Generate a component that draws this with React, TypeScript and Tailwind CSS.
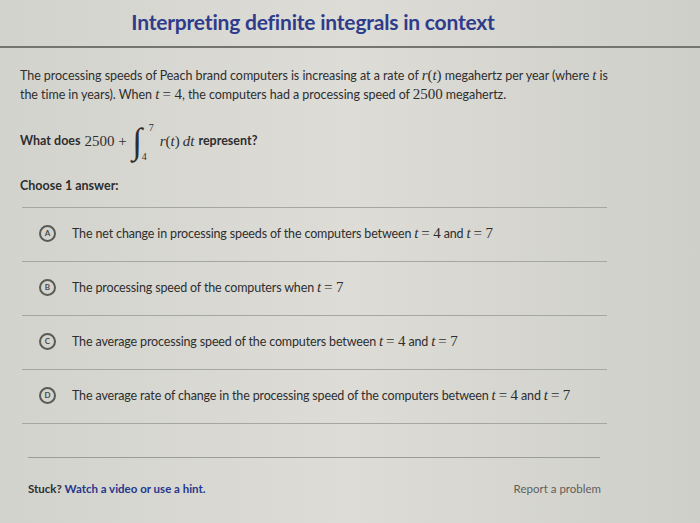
import React from "react";

const serif = "font-['Liberation_Serif','DejaVu_Serif',serif]";

// inline math bits, KaTeX-ish
function M({ children }: { children: React.ReactNode }) {
  return <span className={`${serif} text-[15px] font-normal`}>{children}</span>;
}
function I({ children }: { children: React.ReactNode }) {
  return <span className={`${serif} italic text-[15px] font-normal`}>{children}</span>;
}

const options = [
  {
    key: "A",
    text: (
      <>
        The net change in processing speeds of the computers between <I>t</I> <M>= 4</M> and <I>t</I> <M>= 7</M>
      </>
    ),
  },
  {
    key: "B",
    text: (
      <>
        The processing speed of the computers when <I>t</I> <M>= 7</M>
      </>
    ),
  },
  {
    key: "C",
    text: (
      <>
        The average processing speed of the computers between <I>t</I> <M>= 4</M> and <I>t</I> <M>= 7</M>
      </>
    ),
  },
  {
    key: "D",
    text: (
      <>
        The average rate of change in the processing speed of the computers between <I>t</I> <M>= 4</M> and{" "}
        <I>t</I> <M>= 7</M>
      </>
    ),
  },
];

export default function App() {
  return (
    <div className="w-[700px] h-[523px] overflow-hidden bg-gradient-to-r from-[#d3d3ce] via-[#dddcd7] to-[#cfcfca] font-['Lato','Open_Sans',sans-serif] text-[#2e2e2e]">
      {/* Header */}
      <div className="h-[46px] flex items-center justify-center pb-[2px] pr-[74px]">
        <h1 className="text-[21px] font-bold text-[#2f3c8a] tracking-[-0.2px]">
          Interpreting definite integrals in context
        </h1>
      </div>
      <div className="h-[2px] bg-[#75756f]" />

      <div className="pl-[20px] pr-[20px]">
        {/* Problem text */}
        <p className="mt-[18px] text-[12.5px] leading-[18px] tracking-[-0.05px]">
          The processing speeds of Peach brand computers is increasing at a rate of <I>r</I>
          <M>(</M>
          <I>t</I>
          <M>)</M> megahertz per year (where <I>t</I> is
          <br />
          the time in years). When <I>t</I> <M>= 4</M>, the computers had a processing speed of <M>2500</M>{" "}
          megahertz.
        </p>

        {/* Question */}
        <div className="mt-[17px] h-[40px] flex items-center text-[12.5px] font-bold">
          <span>What does</span>
          <span className="ml-[4px]">
            <M>2500 +</M>
          </span>
          <span className="relative inline-flex items-center ml-[5px] w-[24px] h-[40px]">
            <span className={`${serif} italic text-[36px] leading-none`}>∫</span>
            <span className={`${serif} absolute left-[17px] -top-[1px] text-[10px] font-normal`}>7</span>
            <span className={`${serif} absolute left-[10px] -bottom-[3px] text-[10px] font-normal`}>4</span>
          </span>
          <span className="ml-[4px]">
            <I>r</I>
            <M>(</M>
            <I>t</I>
            <M>)</M> <I>dt</I>
          </span>
          <span className="ml-[4px]">represent?</span>
        </div>

        <div className="mt-[16px] text-[12.5px] leading-[18px] font-bold">Choose 1 answer:</div>

        {/* Options */}
        <div className="mt-[12px] w-[585px] ml-[2px] border-t border-[#a7a7a2]">
          {options.map((o) => (
            <div key={o.key} className="h-[54px] pb-[3px] flex items-center border-b border-[#a7a7a2]">
              <span className="ml-[17px] w-[17px] h-[17px] rounded-full border-2 border-[#5a5a57] flex items-center justify-center text-[8px] font-bold text-[#4a4a48]">
                {o.key}
              </span>
              <span className="ml-[16px] text-[12.5px] tracking-[-0.15px]">{o.text}</span>
            </div>
          ))}
        </div>

        <div className="mt-[33px] ml-[8px] w-[572px] h-px bg-[#9d9d98]" />

        {/* Footer */}
        <div className="mt-[22px] ml-[8px] w-[573px] flex items-center justify-between text-[11.5px]">
          <span className="font-bold">
            Stuck? <span className="text-[#26378c]">Watch a video or use a hint.</span>
          </span>
          <span className="text-[#5f5f5c]">Report a problem</span>
        </div>
      </div>
    </div>
  );
}
